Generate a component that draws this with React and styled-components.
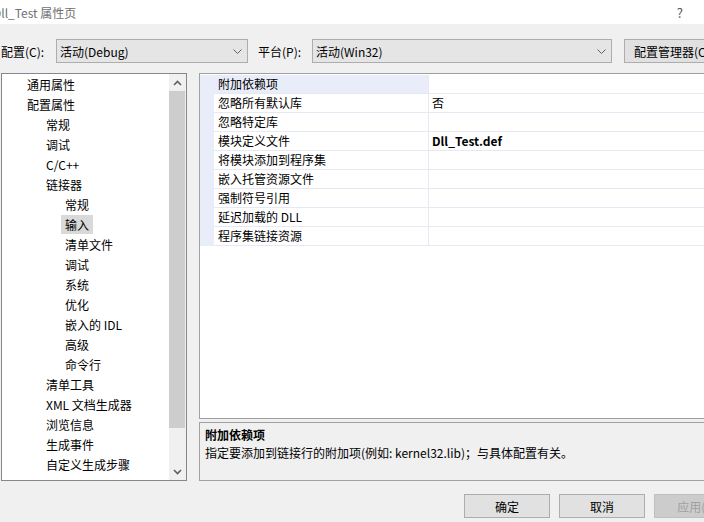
import React from 'react'
import styled, { createGlobalStyle } from 'styled-components'

const GlobalStyle = createGlobalStyle`
  html, body {
    margin: 0;
    padding: 0;
    background: #f0f0f0;
  }
  * {
    box-sizing: border-box;
  }
`

const Window = styled.div`
  width: 704px;
  height: 522px;
  overflow: hidden;
  display: flex;
  flex-direction: column;
  background: #f0f0f0;
  color: #000;
  font-family: 'Noto Sans CJK SC', 'Noto Sans', sans-serif;
  font-size: 12px;
  white-space: nowrap;
`
const TitleBar = styled.div`
  height: 24px;
  flex-shrink: 0;
  background: #fff;
  display: flex;
  align-items: center;
  justify-content: space-between;
  padding-right: 21px;
`
const TitleText = styled.span`
  margin-left: -7px;
  color: #707070;
`
const HelpMark = styled.span`
  color: #555;
  font-size: 13px;
`
const Toolbar = styled.div`
  display: flex;
  align-items: center;
  height: 24px;
  margin-top: 15px;
  flex-shrink: 0;
`
const FieldLabel = styled.span`
  width: ${p => p.$w}px;
  padding-left: ${p => p.$pl || 0}px;
  flex-shrink: 0;
`
const Combo = styled.div`
  width: ${p => p.$w}px;
  height: 24px;
  flex-shrink: 0;
  border: 1px solid #adadad;
  background: #e5e5e5;
  display: flex;
  align-items: center;
  justify-content: space-between;
  padding: 0 5px 0 3px;
  margin-right: ${p => p.$mr || 0}px;
`
const PushButton = styled.div`
  width: ${p => p.$w || 86}px;
  height: 24px;
  flex-shrink: 0;
  border: 1px solid ${p => (p.$disabled ? '#bfbfbf' : '#adadad')};
  background: ${p => (p.$disabled ? '#cccccc' : '#e1e1e1')};
  color: ${p => (p.$disabled ? '#a0a0a0' : '#000')};
  display: flex;
  align-items: center;
  justify-content: ${p => (p.$left ? 'flex-start' : 'center')};
  padding-left: ${p => (p.$left ? 9 : 0)}px;
  overflow: hidden;
`
const Main = styled.div`
  display: flex;
  gap: 12px;
  height: 408px;
  margin-top: 10px;
  padding-left: 1px;
  flex-shrink: 0;
`
const Tree = styled.div`
  width: 186px;
  flex-shrink: 0;
  border: 1px solid #828790;
  background: #fff;
  display: flex;
`
const TreeList = styled.div`
  flex: 1;
  overflow: hidden;
`
const TreeRow = styled.div`
  height: 20px;
  line-height: 20px;
  padding-left: ${p => [25, 44, 63][p.$level]}px;
`
const TreeLabel = styled.span`
  display: inline-block;
  padding: 0 4px;
  margin-left: -4px;
  height: 19px;
  line-height: 19px;
  margin-top: 1px;
  vertical-align: top;
  background: ${p => (p.$selected ? '#d9d9d9' : 'transparent')};
`
const ScrollBar = styled.div`
  width: 17px;
  flex-shrink: 0;
  background: #f0f0f0;
  display: flex;
  flex-direction: column;
`
const ScrollArrow = styled.div`
  height: 17px;
  display: flex;
  align-items: center;
  justify-content: center;
`
const ScrollTrack = styled.div`
  flex: 1;
  display: flex;
  flex-direction: column;
`
const ScrollThumb = styled.div`
  height: 337px;
  margin: 0 1px 0 0;
  background: #cdcdcd;
`
const RightPane = styled.div`
  width: 520px;
  flex-shrink: 0;
  display: flex;
  flex-direction: column;
  gap: 3px;
`
const Grid = styled.div`
  height: 346px;
  border: 1px solid #a0a0a0;
  background: #fff;
  padding-top: 1px;
`
const GridRow = styled.div`
  display: grid;
  grid-template-columns: 14px 215px 1fr;
  height: 19px;
`
const Gutter = styled.div`
  background: #e9ecf9;
`
const NameCell = styled.div`
  padding-left: 4px;
  line-height: 18px;
  border-bottom: 1px solid #e6e9f4;
  border-right: 1px solid #e6e9f4;
  background: ${p => (p.$selected ? '#e9ecf9' : '#fff')};
`
const ValueCell = styled.div`
  padding-left: 3px;
  line-height: 18px;
  border-bottom: 1px solid #e6e9f4;
  font-weight: ${p => (p.$bold ? 700 : 400)};
`
const Description = styled.div`
  flex: 1;
  border: 1px solid #a0a0a0;
  background: #f0f0f0;
  padding: 3px 5px;
  line-height: 18px;
`
const DescTitle = styled.div`
  font-weight: 700;
`
const ButtonRow = styled.div`
  display: flex;
  gap: 9px;
  margin-top: 13px;
  padding-left: 464px;
  flex-shrink: 0;
`

const Chevron = ({ up }) => (
  <svg width="9" height="6" viewBox="0 0 9 6">
    <polyline
      points={up ? '1,5 4.5,1.5 8,5' : '1,1 4.5,4.5 8,1'}
      fill="none"
      stroke="#606060"
      strokeWidth={up ? 1.6 : 1.6}
    />
  </svg>
)

const DropArrow = () => (
  <svg width="9" height="5" viewBox="0 0 9 5">
    <polyline points="0.5,0.5 4.5,4.5 8.5,0.5" fill="none" stroke="#606060" strokeWidth="1" />
  </svg>
)

const treeItems = [
  ['通用属性', 0],
  ['配置属性', 0],
  ['常规', 1],
  ['调试', 1],
  ['C/C++', 1],
  ['链接器', 1],
  ['常规', 2],
  ['输入', 2, true],
  ['清单文件', 2],
  ['调试', 2],
  ['系统', 2],
  ['优化', 2],
  ['嵌入的 IDL', 2],
  ['高级', 2],
  ['命令行', 2],
  ['清单工具', 1],
  ['XML 文档生成器', 1],
  ['浏览信息', 1],
  ['生成事件', 1],
  ['自定义生成步骤', 1],
]

const properties = [
  { name: '附加依赖项', value: '', selected: true },
  { name: '忽略所有默认库', value: '否' },
  { name: '忽略特定库', value: '' },
  { name: '模块定义文件', value: 'Dll_Test.def', bold: true },
  { name: '将模块添加到程序集', value: '' },
  { name: '嵌入托管资源文件', value: '' },
  { name: '强制符号引用', value: '' },
  { name: '延迟加载的 DLL', value: '' },
  { name: '程序集链接资源', value: '' },
]

export default function App() {
  return (
    <>
      <GlobalStyle />
      <Window>
        <TitleBar>
          <TitleText>Dll_Test 属性页</TitleText>
          <HelpMark>?</HelpMark>
        </TitleBar>

        <Toolbar>
          <FieldLabel $w={56} $pl={1}>配置(C):</FieldLabel>
          <Combo $w={192}>
            <span>活动(Debug)</span>
            <DropArrow />
          </Combo>
          <FieldLabel $w={64} $pl={10}>平台(P):</FieldLabel>
          <Combo $w={300} $mr={12}>
            <span>活动(Win32)</span>
            <DropArrow />
          </Combo>
          <PushButton $w={110} $left>配置管理器(C)...</PushButton>
        </Toolbar>

        <Main>
          <Tree>
            <TreeList>
              {treeItems.map(([label, level, selected], i) => (
                <TreeRow key={i} $level={level}>
                  <TreeLabel $selected={selected}>{label}</TreeLabel>
                </TreeRow>
              ))}
            </TreeList>
            <ScrollBar>
              <ScrollArrow>
                <Chevron up />
              </ScrollArrow>
              <ScrollTrack>
                <ScrollThumb />
              </ScrollTrack>
              <ScrollArrow>
                <Chevron />
              </ScrollArrow>
            </ScrollBar>
          </Tree>

          <RightPane>
            <Grid>
              {properties.map(p => (
                <GridRow key={p.name}>
                  <Gutter />
                  <NameCell $selected={p.selected}>{p.name}</NameCell>
                  <ValueCell $bold={p.bold}>{p.value}</ValueCell>
                </GridRow>
              ))}
            </Grid>
            <Description>
              <DescTitle>附加依赖项</DescTitle>
              <div>指定要添加到链接行的附加项(例如: kernel32.lib)；与具体配置有关。</div>
            </Description>
          </RightPane>
        </Main>

        <ButtonRow>
          <PushButton>确定</PushButton>
          <PushButton>取消</PushButton>
          <PushButton $disabled>应用(A)</PushButton>
        </ButtonRow>
      </Window>
    </>
  )
}
